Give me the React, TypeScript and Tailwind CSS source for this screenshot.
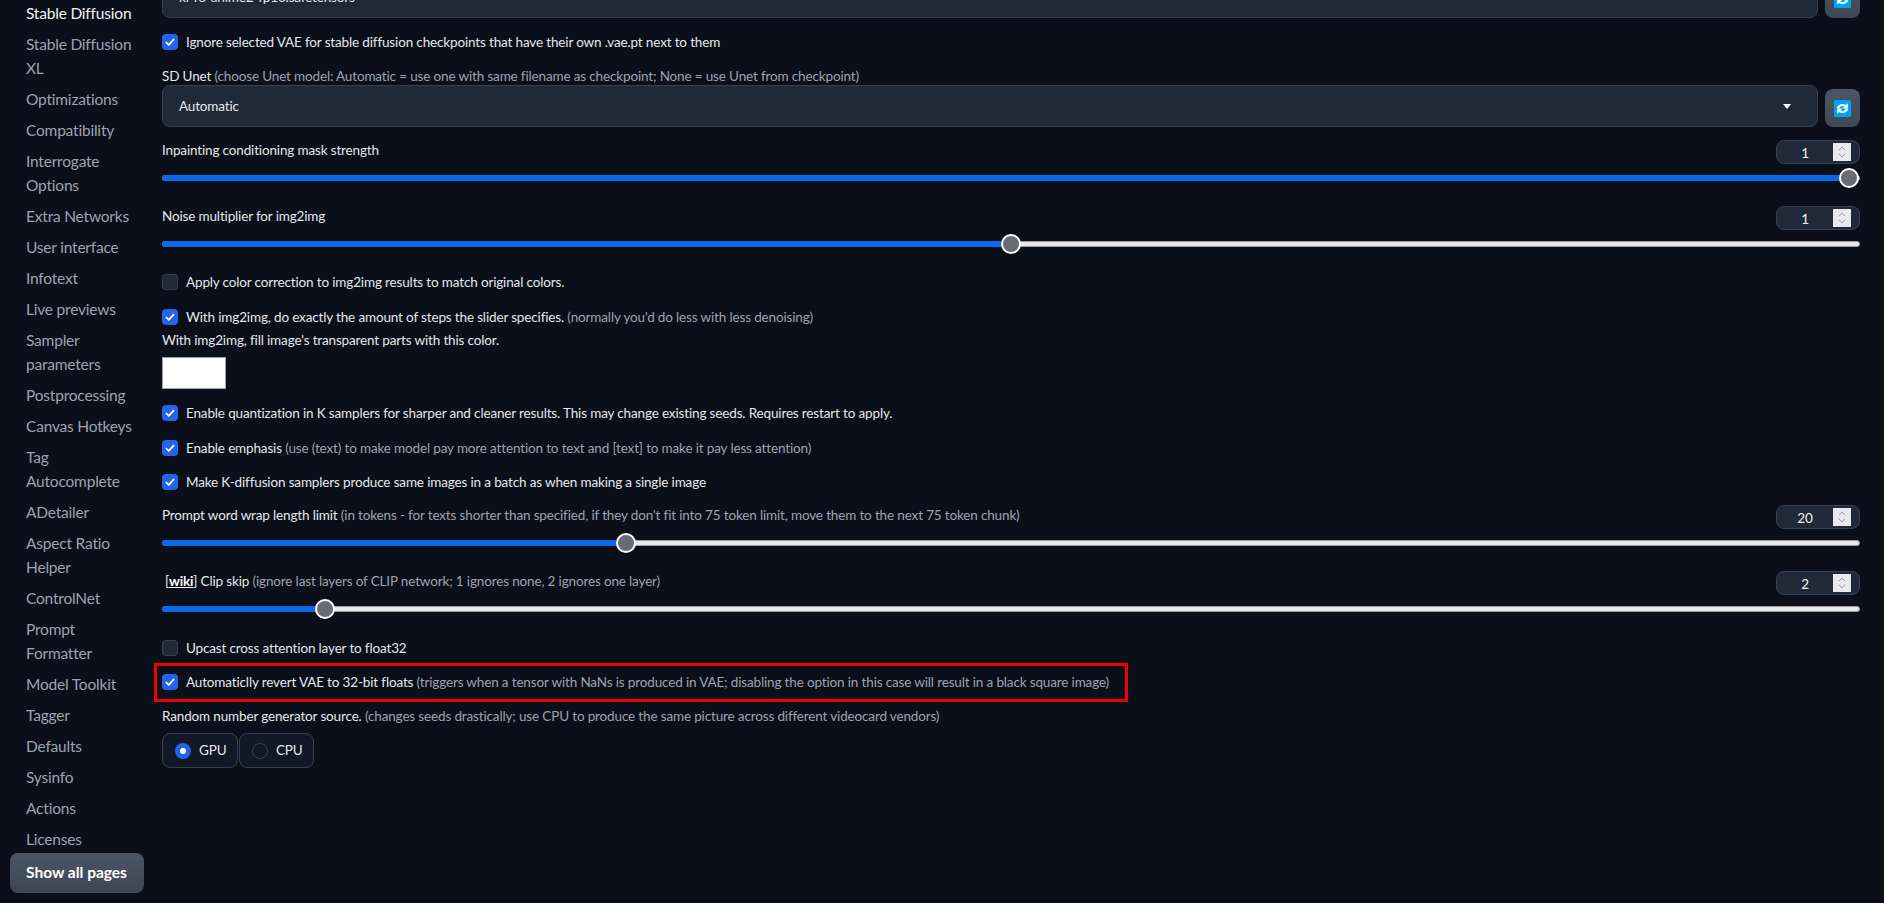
import { ChevronDown, ChevronUp } from "lucide-react";
import type { ReactNode } from "react";

const pages = [
  "Stable Diffusion",
  "Stable Diffusion\nXL",
  "Optimizations",
  "Compatibility",
  "Interrogate\nOptions",
  "Extra Networks",
  "User interface",
  "Infotext",
  "Live previews",
  "Sampler\nparameters",
  "Postprocessing",
  "Canvas Hotkeys",
  "Tag\nAutocomplete",
  "ADetailer",
  "Aspect Ratio\nHelper",
  "ControlNet",
  "Prompt\nFormatter",
  "Model Toolkit",
  "Tagger",
  "Defaults",
  "Sysinfo",
  "Actions",
  "Licenses",
];

function Hint({ children }: { children: ReactNode }) {
  return <span className="text-[#9ca3af]">{children}</span>;
}

function RefreshButton() {
  return (
    <div className="w-[35px] h-[38px] shrink-0 rounded-lg bg-gradient-to-b from-[#4b5563] to-[#3f4856] flex items-center justify-center">
      <svg width="17" height="17" viewBox="0 0 17 17">
        <rect width="17" height="17" rx="1.5" fill="#00a6ed" />
        <path d="M3 8.2 C3.2 4.5 8.8 2.6 12 5 L13.8 3.2 V8.4 H8.6 L10.4 6.6 C8.4 5.2 5.8 6.2 5.6 8.2 Z" fill="#fff" />
        <path d="M14 8.8 C13.8 12.5 8.2 14.4 5 12 L3.2 13.8 V8.6 H8.4 L6.6 10.4 C8.6 11.8 11.2 10.8 11.4 8.8 Z" fill="#fff" />
      </svg>
    </div>
  );
}

function Dropdown({ label, arrow }: { label: string; arrow?: boolean }) {
  return (
    <div className="flex-1 h-[42px] rounded-lg border border-[#374151] bg-[#1f2937] pl-[16px] pr-[26px] flex items-center justify-between">
      <span className="text-[#e5e7eb]">{label}</span>
      {arrow && (
        <span className="w-0 h-0 border-x-[4px] border-x-transparent border-t-[5px] border-t-white" />
      )}
    </div>
  );
}

function Check({ checked }: { checked: boolean }) {
  if (!checked) {
    return <span className="w-4 h-4 shrink-0 rounded-[4px] border border-[#374151] bg-[#1f2937]" />;
  }
  return (
    <span className="w-4 h-4 shrink-0 rounded-[4px] bg-[#2563eb] flex items-center justify-center">
      <svg width="10" height="8" viewBox="0 0 10 8" fill="none">
        <path d="M1 4.2 L3.8 6.8 L9 1.2" stroke="#fff" strokeWidth="1.8" />
      </svg>
    </span>
  );
}

function CheckRow({ checked = true, className, children }: { checked?: boolean; className: string; children: ReactNode }) {
  return (
    <div className={`h-6 flex items-center gap-2 ${className}`}>
      <Check checked={checked} />
      <span className="text-[#e5e7eb] whitespace-nowrap">{children}</span>
    </div>
  );
}

function SliderRow({ label, value, min, max, className }: { label: ReactNode; value: number; min: number; max: number; className: string }) {
  const pct = (value - min) / (max - min);
  // the thumb travels between the two ends of the track minus its own width
  const left = `calc(${pct} * (100% - 20px) + 10px)`;
  return (
    <div className={className}>
      <div className="flex items-start justify-between">
        <span className="text-[#e5e7eb] leading-5">{label}</span>
        <div className="w-[84px] h-6 rounded-lg border border-[#374151] bg-[#1f2937] relative flex items-center">
          <span className="w-[56px] text-center text-[#f3f4f6] leading-5 pt-0.5">{value}</span>
          <span className="w-[18px] h-[18px] bg-[#e9e9ed] flex flex-col items-center justify-center text-[#8f8f9d]">
            <ChevronUp size={12} strokeWidth={2} className="-mb-[2px]" />
            <ChevronDown size={12} strokeWidth={2} className="-mt-[2px]" />
          </span>
        </div>
      </div>
      <div className="mt-[11px] h-1.5 rounded-sm bg-[#e9e9ed] border border-[#9a9aa3] relative">
        <div className="-m-px h-1.5 rounded-l-sm bg-[#0b68e9]" style={{ width: left }} />
        <span
          className="absolute top-[-8px] ml-[-10px] w-5 h-5 rounded-full border-2 border-white bg-[#6b6b76]"
          style={{ left }}
        />
      </div>
    </div>
  );
}

function Radio({ label, checked, className }: { label: string; checked?: boolean; className: string }) {
  return (
    <div className={`h-[35px] pl-[12px] rounded-lg border border-[#374151] bg-[#111827] flex items-center gap-2 ${className}`}>
      {checked ? (
        <span className="w-4 h-4 rounded-full bg-[#2563eb] flex items-center justify-center">
          <span className="w-[6px] h-[6px] rounded-full bg-white" />
        </span>
      ) : (
        <span className="w-4 h-4 rounded-full border border-[#374151] bg-[#111827]" />
      )}
      <span className="text-[#e5e7eb]">{label}</span>
    </div>
  );
}

export default function App() {
  return (
    <div className="h-[903px] overflow-hidden bg-[#0b0f19] flex font-['Lato','Liberation_Sans',sans-serif] text-[13.5px] tracking-[-0.15px]">
      <aside className="w-[162px] shrink-0 pl-[10px] pt-[1px]">
        <nav className="flex flex-col gap-[7px] pl-4 text-[15.5px] tracking-[-0.2px] leading-6 text-[#9ca3af]">
          {pages.map((page, i) => (
            <div key={page} className={`whitespace-pre-line ${i === 0 ? "text-[#f3f4f6]" : ""}`}>
              {page}
            </div>
          ))}
        </nav>
        <button className="mt-[2px] w-[134px] h-10 rounded-lg bg-gradient-to-b from-[#4b5563] to-[#3d4654] pl-4 text-left text-[15.5px] tracking-normal font-bold text-white">
          Show all pages
        </button>
      </aside>

      <main className="w-[1698px] flex flex-col">
        <div className="mt-[-24px] flex items-end gap-[7px]">
          <Dropdown label="kl-f8-anime2-fp16.safetensors" />
          <RefreshButton />
        </div>

        <CheckRow className="mt-3">Ignore selected VAE for stable diffusion checkpoints that have their own .vae.pt next to them</CheckRow>

        <div className="mt-3 h-[19px] leading-5 text-[#e5e7eb]">
          SD Unet <Hint>(choose Unet model: Automatic = use one with same filename as checkpoint; None = use Unet from checkpoint)</Hint>
        </div>
        <div className="flex items-end gap-[7px]">
          <Dropdown label="Automatic" arrow />
          <RefreshButton />
        </div>

        <SliderRow className="mt-[13px]" label="Inpainting conditioning mask strength" value={1} min={0} max={1} />
        <SliderRow className="mt-[25px]" label="Noise multiplier for img2img" value={1} min={0} max={2} />

        <CheckRow checked={false} className="mt-[23px]">Apply color correction to img2img results to match original colors.</CheckRow>
        <CheckRow className="mt-[11px]">
          With img2img, do exactly the amount of steps the slider specifies. <Hint>(normally you'd do less with less denoising)</Hint>
        </CheckRow>
        <div className="mt-px h-5 leading-5 text-[#e5e7eb]">With img2img, fill image's transparent parts with this color.</div>
        <div className="mt-[7px] w-16 h-8 bg-white border border-[#9ca3af]" />

        <CheckRow className="mt-3">Enable quantization in K samplers for sharper and cleaner results. This may change existing seeds. Requires restart to apply.</CheckRow>
        <CheckRow className="mt-[11px]">
          Enable emphasis <Hint>(use (text) to make model pay more attention to text and [text] to make it pay less attention)</Hint>
        </CheckRow>
        <CheckRow className="mt-[10px]">Make K-diffusion samplers produce same images in a batch as when making a single image</CheckRow>

        <SliderRow
          className="mt-[11px]"
          label={
            <>
              Prompt word wrap length limit{" "}
              <Hint>(in tokens - for texts shorter than specified, if they don't fit into 75 token limit, move them to the next 75 token chunk)</Hint>
            </>
          }
          value={20}
          min={0}
          max={74}
        />
        <SliderRow
          className="mt-[25px]"
          label={
            <span className="pl-[3px]">
              [<span className="font-bold underline text-white">wiki</span>] Clip skip{" "}
              <Hint>(ignore last layers of CLIP network; 1 ignores none, 2 ignores one layer)</Hint>
            </span>
          }
          value={2}
          min={1}
          max={12}
        />

        <CheckRow checked={false} className="mt-6">Upcast cross attention layer to float32</CheckRow>
        <div className="relative mt-[10px]">
          <CheckRow className="">
            Automaticlly revert VAE to 32-bit floats <Hint>(triggers when a tensor with NaNs is produced in VAE; disabling the option in this case will result in a black square image)</Hint>
          </CheckRow>
          <div className="absolute top-[-7px] left-[-8px] w-[974px] h-[39px] border-[3px] border-[#f00000]" />
        </div>

        <div className="mt-3 h-5 leading-5 text-[#e5e7eb]">
          Random number generator source. <Hint>(changes seeds drastically; use CPU to produce the same picture across different videocard vendors)</Hint>
        </div>
        <div className="mt-[7px] flex gap-px">
          <Radio label="GPU" checked className="w-[76px]" />
          <Radio label="CPU" className="w-[75px]" />
        </div>
      </main>
    </div>
  );
}
